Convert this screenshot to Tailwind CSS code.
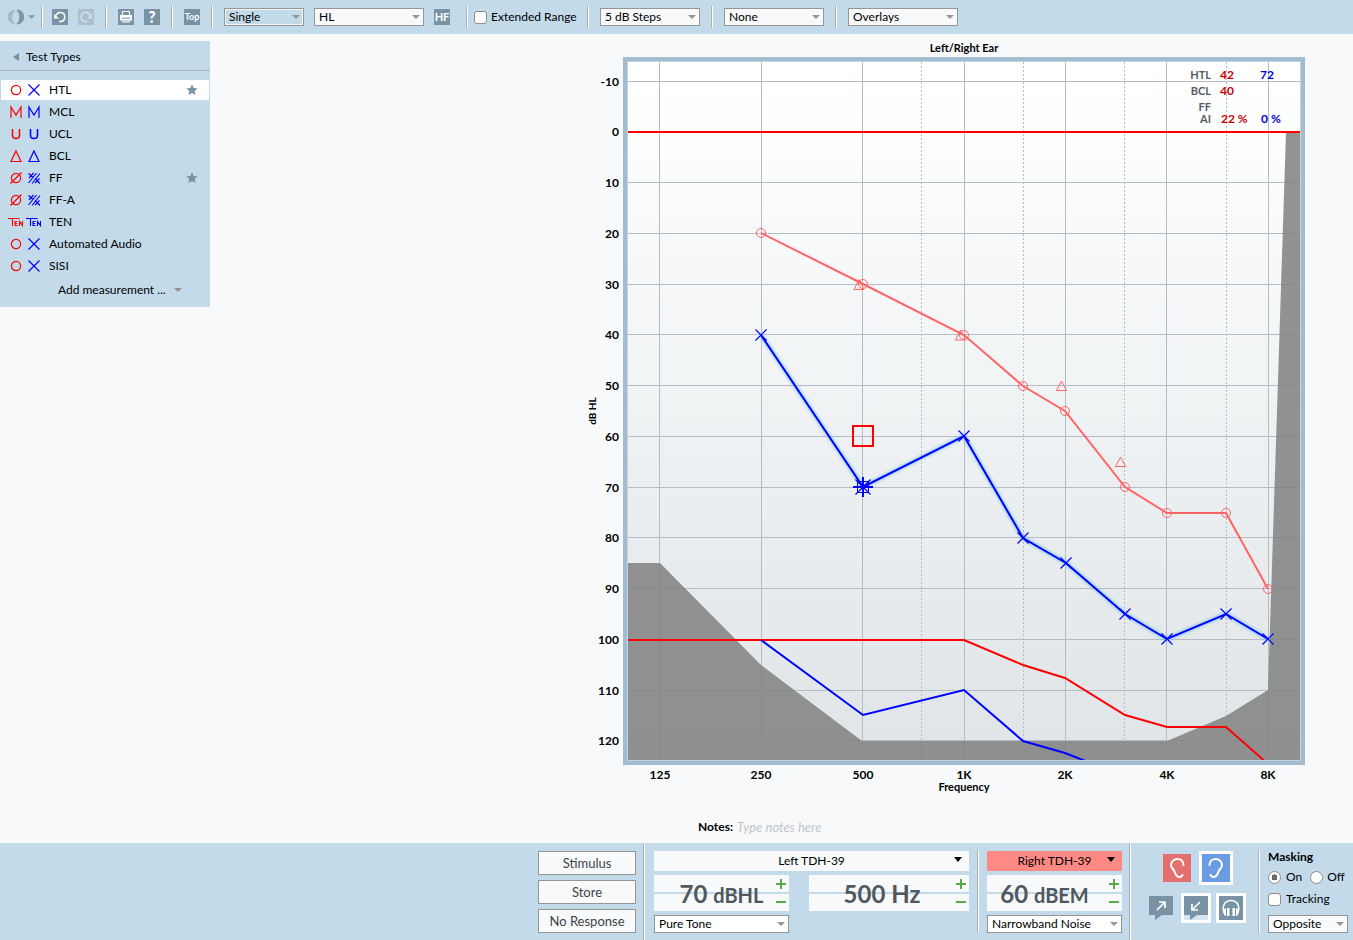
<!DOCTYPE html>
<html lang="en">
<head>
<meta charset="utf-8">
<title>Audiometry</title>
<meta name="viewport" content="width=device-width, initial-scale=1">
<script src="https://cdn.jsdelivr.net/npm/@tailwindcss/browser@4"></script>
</head>
<body class="flex min-h-screen flex-col bg-[#f7f9fb] font-['Lato','Open_Sans',sans-serif] text-[12px] leading-4 text-black">

<svg class="hidden" aria-hidden="true">
  <defs>
    <symbol id="o" viewBox="0 0 16 16"><circle cx="8" cy="8" r="4.6" fill="none" stroke="currentColor" stroke-width="1.2"/></symbol>
    <symbol id="x" viewBox="0 0 16 16"><path d="M2.500 2.500l11 11M13.500 2.500l-11 11" fill="none" stroke="currentColor" stroke-width="1.2"/></symbol>
    <symbol id="m" viewBox="0 0 16 16"><path d="M3 14V3l5 8 5-8v11" fill="none" stroke="currentColor" stroke-width="1.2"/></symbol>
    <symbol id="u" viewBox="0 0 16 16"><path d="M4.500 3v6.500q0 3 3.500 3t3.500-3V3" fill="none" stroke="currentColor" stroke-width="1.500"/></symbol>
    <symbol id="t" viewBox="0 0 16 16"><path d="M8 3L13 13.500H3z" fill="none" stroke="currentColor" stroke-width="1.2"/></symbol>
    <symbol id="oo" viewBox="0 0 16 16"><circle cx="8" cy="8" r="4.6" fill="none" stroke="currentColor" stroke-width="1.2"/><path d="M2.500 13.500l11-11" stroke="currentColor" stroke-width="1.2"/></symbol>
    <symbol id="xx" viewBox="0 0 16 16"><path d="M2.500 13l8-10M6 13.500l8-10M2.500 3.500l4.500 4M3 8l4.500-5M9 8.500l5 5M9 13l4.500-4.500" stroke="currentColor" stroke-width="1.200" fill="none"/></symbol>
    <symbol id="ten" viewBox="0 0 16 16"><path d="M0 4.500h11.500M4.500 4.500V12M9.500 7.500H7v4h2.500M7 9.500h2M11.500 12V7.500l3 4V7" stroke="currentColor" stroke-width="1.100" fill="none"/></symbol>
    <symbol id="star" viewBox="0 0 12 12"><path d="M6 .3l1.700 3.700 4 .4-3 2.700.9 4L6 9.100 2.400 11.100l.9-4L.3 4.400l4-.4z" fill="#7693a7"/></symbol>
    <symbol id="down" viewBox="0 0 8 4"><path d="M0 0h8L4 4z" fill="currentColor"/></symbol>
    <symbol id="plus" viewBox="0 0 10 10"><path d="M5 0v10M0 5h10" stroke="#5aa84c" stroke-width="2"/></symbol>
    <symbol id="minus" viewBox="0 0 10 2"><path d="M0 1h10" stroke="#5aa84c" stroke-width="2"/></symbol>
  </defs>
</svg>

<header class="flex h-[34px] shrink-0 items-center bg-[#c2daea]">
  <button class="ml-2 flex items-center" aria-label="Menu">
    <svg class="h-4 w-4" viewBox="0 0 16 16"><path d="M6.500 1.500A6.500 6.500 0 0 0 6.500 14.500 9 9 0 0 1 6.500 1.500z" fill="#a3bac9" stroke="#a3bac9"/><path d="M9 1a7 7 0 0 1 0 14 10 10 0 0 0 0-14z" fill="#7d98aa" stroke="#7d98aa"/></svg>
    <svg class="ml-1 h-1 w-[7px] text-[#7f97a6]"><use href="#down"/></svg>
  </button>
  <i class="ml-[6px] mr-[9px] h-[22px] w-[2px] border-r border-white bg-[#a9b3ba]"></i>
  <button class="h-4 w-4 bg-[#7893a5]" aria-label="Undo"><svg viewBox="0 0 16 16"><path d="M4 6.500a4.500 4.500 0 1 1 4.500 6H7" fill="none" stroke="#fff" stroke-width="1.500"/><path d="M2 5v4.500h5z" fill="#fff"/></svg></button>
  <button class="ml-[10px] h-4 w-4 bg-[#a9c1d1]" aria-label="Redo"><svg viewBox="0 0 16 16"><path d="M12 6.500a4.500 4.500 0 1 0-4.500 6H9" fill="none" stroke="#d3e3ee" stroke-width="1.500"/><path d="M14 5v4.500H9z" fill="#d3e3ee"/></svg></button>
  <i class="mx-[11px] h-[22px] w-[2px] border-r border-white bg-[#a9b3ba]"></i>
  <button class="h-4 w-4 bg-[#7893a5]" aria-label="Print"><svg viewBox="0 0 16 16"><path d="M4.500 6V2.500h7V6" fill="none" stroke="#fff" stroke-width="1.200"/><path d="M2 6h12v5.500H2z" fill="#fff"/><path d="M3.500 9.200h9" stroke="#7893a5"/><path d="M4 11h8v2.500H4z" fill="#fff"/><path d="M4.500 12h7" stroke="#7893a5" stroke-width=".8"/></svg></button>
  <button class="ml-[10px] h-4 w-4 bg-[#7893a5] text-center text-[16px] font-black leading-4 text-white" aria-label="Help">?</button>
  <i class="mx-[11px] h-[22px] w-[2px] border-r border-white bg-[#a9b3ba]"></i>
  <button class="h-4 w-4 bg-[#7893a5] text-center text-[9px] font-bold leading-4 text-white">Top</button>
  <i class="mx-[11px] h-[22px] w-[2px] border-r border-white bg-[#a9b3ba]"></i>
  <div class="relative h-[18px] w-20"><select aria-label="Presentation" class="block h-full w-full appearance-none border border-[#969696] bg-[#c2daea] pl-1 leading-4 outline outline-1 -outline-offset-2 outline-[#f0f5f9]"><option>Single</option></select><svg class="pointer-events-none absolute right-1 top-[7px] h-1 w-2 text-[#969696]"><use href="#down"/></svg></div>
  <div class="relative ml-[10px] h-[18px] w-[110px]"><select aria-label="Level unit" class="block h-full w-full appearance-none border border-[#969696] bg-[#f7f9fb] pl-1 leading-4"><option>HL</option></select><svg class="pointer-events-none absolute right-1 top-[7px] h-1 w-2 text-[#969696]"><use href="#down"/></svg></div>
  <button class="ml-[10px] h-4 w-4 bg-[#7893a5] text-center text-[11px] font-bold leading-4 text-white">HF</button>
  <i class="ml-4 mr-[6px] h-[22px] w-[2px] border-r border-white bg-[#a9b3ba]"></i>
  <label class="flex w-[113px] items-center gap-1 whitespace-nowrap"><input type="checkbox" class="h-[13px] w-[13px] appearance-none rounded-[3px] border border-[#8c8c8c] bg-white">Extended Range</label>
  <i class="mr-[11px] h-[22px] w-[2px] border-r border-white bg-[#a9b3ba]"></i>
  <div class="relative h-[18px] w-[100px]"><select aria-label="Step size" class="block h-full w-full appearance-none border border-[#969696] bg-[#f7f9fb] pl-1 leading-4"><option>5 dB Steps</option></select><svg class="pointer-events-none absolute right-1 top-[7px] h-1 w-2 text-[#969696]"><use href="#down"/></svg></div>
  <i class="mx-[11px] h-[22px] w-[2px] border-r border-white bg-[#a9b3ba]"></i>
  <div class="relative h-[18px] w-[100px]"><select aria-label="Condition" class="block h-full w-full appearance-none border border-[#969696] bg-[#f7f9fb] pl-1 leading-4"><option>None</option></select><svg class="pointer-events-none absolute right-1 top-[7px] h-1 w-2 text-[#969696]"><use href="#down"/></svg></div>
  <i class="mx-[11px] h-[22px] w-[2px] border-r border-white bg-[#a9b3ba]"></i>
  <div class="relative h-[18px] w-[110px]"><select aria-label="Overlays" class="block h-full w-full appearance-none border border-[#969696] bg-[#f7f9fb] pl-1 leading-4"><option>Overlays</option></select><svg class="pointer-events-none absolute right-1 top-[7px] h-1 w-2 text-[#969696]"><use href="#down"/></svg></div>
</header>

<main class="flex flex-1 items-start">
  <aside class="mt-[7px] w-[210px] shrink-0 bg-[#c2daea] pb-[7px]">
    <button class="flex h-[30px] w-full items-center gap-[7px] border-b border-[#a9b3ba] pl-[13px] pt-[2px]"><svg class="h-2 w-[6px]" viewBox="0 0 6 8"><path d="M6 0v8L0 4z" fill="#7f8b92"/></svg>Test Types</button>
    <ul class="flex flex-col gap-[2px] px-px pt-[9px]">
      <li><button class="flex h-5 w-full items-center bg-white pl-[7px] pr-[11px]"><svg class="h-4 w-4 text-[#ff0000]"><use href="#o"/></svg><svg class="ml-[2px] h-4 w-4 text-[#0000ff]"><use href="#x"/></svg><span class="ml-[7px] flex-1 text-left">HTL</span><svg class="h-3 w-3"><use href="#star"/></svg></button></li>
      <li><button class="flex h-5 w-full items-center pl-[7px]"><svg class="h-4 w-4 text-[#ff0000]"><use href="#m"/></svg><svg class="ml-[2px] h-4 w-4 text-[#0000ff]"><use href="#m"/></svg><span class="ml-[7px]">MCL</span></button></li>
      <li><button class="flex h-5 w-full items-center pl-[7px]"><svg class="h-4 w-4 text-[#ff0000]"><use href="#u"/></svg><svg class="ml-[2px] h-4 w-4 text-[#0000ff]"><use href="#u"/></svg><span class="ml-[7px]">UCL</span></button></li>
      <li><button class="flex h-5 w-full items-center pl-[7px]"><svg class="h-4 w-4 text-[#ff0000]"><use href="#t"/></svg><svg class="ml-[2px] h-4 w-4 text-[#0000ff]"><use href="#t"/></svg><span class="ml-[7px]">BCL</span></button></li>
      <li><button class="flex h-5 w-full items-center pl-[7px] pr-[11px]"><svg class="h-4 w-4 text-[#ff0000]"><use href="#oo"/></svg><svg class="ml-[2px] h-4 w-4 text-[#0000ff]"><use href="#xx"/></svg><span class="ml-[7px] flex-1 text-left">FF</span><svg class="h-3 w-3"><use href="#star"/></svg></button></li>
      <li><button class="flex h-5 w-full items-center pl-[7px]"><svg class="h-4 w-4 text-[#ff0000]"><use href="#oo"/></svg><svg class="ml-[2px] h-4 w-4 text-[#0000ff]"><use href="#xx"/></svg><span class="ml-[7px]">FF-A</span></button></li>
      <li><button class="flex h-5 w-full items-center pl-[7px]"><svg class="h-4 w-4 text-[#ff0000]"><use href="#ten"/></svg><svg class="ml-[2px] h-4 w-4 text-[#0000ff]"><use href="#ten"/></svg><span class="ml-[7px]">TEN</span></button></li>
      <li><button class="flex h-5 w-full items-center pl-[7px]"><svg class="h-4 w-4 text-[#ff0000]"><use href="#o"/></svg><svg class="ml-[2px] h-4 w-4 text-[#0000ff]"><use href="#x"/></svg><span class="ml-[7px]">Automated Audio</span></button></li>
      <li><button class="flex h-5 w-full items-center pl-[7px]"><svg class="h-4 w-4 text-[#ff0000]"><use href="#o"/></svg><svg class="ml-[2px] h-4 w-4 text-[#0000ff]"><use href="#x"/></svg><span class="ml-[7px]">SISI</span></button></li>
    </ul>
    <button class="mt-1 flex h-5 w-full items-center gap-2 pl-[58px]">Add measurement ...<svg class="h-1 w-2 text-[#969696]"><use href="#down"/></svg></button>
  </aside>

  <section class="flex min-w-0 flex-1 flex-col items-end">
    <svg class="block h-auto w-full max-w-[773px] text-[11px] font-bold" viewBox="580 34 773 777" role="img" aria-label="Audiogram">
      <defs>
        <linearGradient id="bg" x1="0" y1="0" x2="0" y2="1"><stop offset="0" stop-color="#ffffff"/><stop offset=".1" stop-color="#fdfefe"/><stop offset="1" stop-color="#dfe4e7"/></linearGradient>
        <filter id="glow" x="-10%" y="-10%" width="120%" height="120%"><feGaussianBlur stdDeviation="1.8"/></filter>
        <clipPath id="plot"><rect x="628" y="62" width="672" height="698"/></clipPath>
      </defs>
      <text x="964" y="52" text-anchor="middle">Left/Right Ear</text>
      <rect x="623" y="57" width="682" height="708" fill="#a2bdd0"/>
      <rect x="627" y="61" width="674" height="700" fill="#c9d0dc"/>
      <rect x="628" y="62" width="672" height="698" fill="url(#bg)"/>
      <path stroke="#b5bcc6" d="M659.500 62v698M761.500 62v698M862.500 62v698M964.500 62v698M1065.500 62v698M1166.500 62v698M1268.500 62v698M628 81.500h672M628 182.500h672M628 233.500h672M628 284.500h672M628 334.500h672M628 385.500h672M628 436.500h672M628 487.500h672M628 537.500h672M628 588.500h672M628 639.500h672M628 690.500h672M628 740.500h672"/>
      <path stroke="#b5bcc6" stroke-dasharray="2 2" d="M921.500 62v698M1023.500 62v698M1124.500 62v698M1226.500 62v698"/>
      <path d="M628 563H660L761 665 862 741H1167L1226 716 1268 690 1286 132H1300V760H628z" fill="#808080" fill-opacity=".85"/>
      <g clip-path="url(#plot)" fill="none" stroke-width="2">
        <path stroke="#ff0000" d="M628 132h673M628 640H964L1023 665 1065 678 1125 715 1167 727H1226L1268 764"/>
        <path stroke="#0000ff" d="M761 640L863 715 964 690 1023 741 1065 753 1093 764"/>
        <path stroke="#ff6464" d="M761 233L863 284 964 335 1023 386 1065 411 1125 487 1167 513H1226L1268 589"/>
        <path stroke="#7cc4ee" stroke-width="4" stroke-opacity=".8" filter="url(#glow)" d="M761 335L863 487 964 436 1023 538 1066 563 1125 614 1167 639 1226 614 1268 639"/>
        <path stroke="#0000ff" d="M761 335L863 487 964 436 1023 538 1066 563 1125 614 1167 639 1226 614 1268 639"/>
      </g>
      <g fill="none" stroke="#ff6464">
        <circle cx="761" cy="233" r="4.500"/><circle cx="863" cy="284" r="4.500"/><circle cx="964" cy="335" r="4.500"/><circle cx="1023" cy="386" r="4.500"/><circle cx="1065" cy="411" r="4.500"/><circle cx="1125" cy="487" r="4.500"/><circle cx="1167" cy="513" r="4.500"/><circle cx="1226" cy="513" r="4.500"/><circle cx="1268" cy="589" r="4.500"/>
        <path d="M859 279.500l5 10h-10zM960.500 330l5 10h-10zM1061.500 381l5 9.500h-10zM1120.500 457l5 9.500h-10z"/>
      </g>
      <path stroke="#0000ff" stroke-width="1.200" d="M755.500 329.500l11 11m0-11l-11 11M958.500 430.500l11 11m0-11l-11 11M1017.500 532.500l11 11m0-11l-11 11M1060.500 557.500l11 11m0-11l-11 11M1119.500 608.500l11 11m0-11l-11 11M1161.500 633.500l11 11m0-11l-11 11M1220.500 608.500l11 11m0-11l-11 11M1262.500 633.500l11 11m0-11l-11 11M855.500 479.500l15 15m0-15l-15 15"/>
      <path stroke="#0000ff" stroke-width="2" d="M863 477v20M853 487h20"/>
      <rect x="857.500" y="481.500" width="11" height="11" fill="none" stroke="#0000ff"/>
      <rect x="853" y="426" width="20" height="20" fill="none" stroke="#ff0000" stroke-width="2"/>
      <g class="text-[12px]" text-anchor="end">
        <text x="619" y="86">-10</text><text x="619" y="136">0</text><text x="619" y="187">10</text><text x="619" y="238">20</text><text x="619" y="289">30</text><text x="619" y="339">40</text><text x="619" y="390">50</text><text x="619" y="441">60</text><text x="619" y="492">70</text><text x="619" y="542">80</text><text x="619" y="593">90</text><text x="619" y="644">100</text><text x="619" y="695">110</text><text x="619" y="745">120</text>
      </g>
      <g class="text-[12px]" text-anchor="middle">
        <text x="660" y="779">125</text><text x="761" y="779">250</text><text x="863" y="779">500</text><text x="964" y="779">1K</text><text x="1065" y="779">2K</text><text x="1167" y="779">4K</text><text x="1268" y="779">8K</text>
      </g>
      <text x="964" y="791" text-anchor="middle">Frequency</text>
      <text transform="translate(596 411) rotate(-90)" text-anchor="middle" class="text-[10px]">dB HL</text>
      <g class="text-[11px]" fill="#555d63" text-anchor="end"><text x="1211" y="79">HTL</text><text x="1211" y="95">BCL</text><text x="1211" y="111">FF</text><text x="1211" y="123">AI</text></g>
      <g class="text-[12px]" fill="#c80000"><text x="1220" y="79">42</text><text x="1220" y="95">40</text><text x="1221" y="123">22 %</text></g>
      <g class="text-[12px]" fill="#0000dc"><text x="1260" y="79">72</text><text x="1261" y="123">0 %</text></g>
    </svg>
    <div class="flex h-8 w-full max-w-[773px] items-center gap-1 pl-[118px]">
      <label for="notes" class="font-bold">Notes:</label>
      <input id="notes" type="text" placeholder="Type notes here" class="min-w-0 flex-1 bg-transparent text-[13px] italic outline-none placeholder:text-[#c3c6c9]">
    </div>
  </section>
</main>

<footer class="flex h-[97px] shrink-0 justify-end bg-[#c2daea]">
  <div class="flex flex-col gap-[5px] pr-[7px] pt-2 text-[13px] text-[#3c4448]">
    <button class="h-6 w-[98px] border border-[#969696] bg-[#f7f9fb]">Stimulus</button>
    <button class="h-6 w-[98px] border border-[#969696] bg-[#f7f9fb]">Store</button>
    <button class="h-6 w-[98px] border border-[#969696] bg-[#f7f9fb]">No Response</button>
  </div>
  <i class="w-[2px] border-r border-white bg-[#a9b3ba]"></i>

  <section class="flex w-[332px] flex-col gap-1 px-[9px] pt-2" aria-label="Left channel">
    <button class="relative h-5 w-[315px] bg-[#f7f9fb]">Left TDH-39<svg class="absolute right-[7px] top-[6px] h-[5px] w-2 text-black" viewBox="0 0 8 5"><path d="M0 0h8L4 5z"/></svg></button>
    <div class="flex w-[315px] justify-between">
      <div class="relative flex h-9 w-[135px] items-center justify-center bg-[#f7f9fb] text-[#50585d]">
        <i class="absolute inset-x-0 top-[17px] h-[2px] bg-[#c2daea]"></i>
        <span class="relative pt-[2px] text-2xl font-bold">70 <span class="text-[20px]">dBHL</span></span>
        <button class="absolute right-[3px] top-1" aria-label="Raise left level"><svg class="block h-[10px] w-[10px]"><use href="#plus"/></svg></button>
        <button class="absolute bottom-2 right-[3px]" aria-label="Lower left level"><svg class="block h-[2px] w-[10px]"><use href="#minus"/></svg></button>
      </div>
      <div class="relative flex h-9 w-40 items-center bg-[#f7f9fb] text-[#50585d]">
        <i class="absolute inset-x-0 top-[17px] h-[2px] bg-[#c2daea]"></i>
        <span class="relative w-[146px] pt-[2px] text-center text-2xl font-bold">500 Hz</span>
        <button class="absolute right-[3px] top-1" aria-label="Raise frequency"><svg class="block h-[10px] w-[10px]"><use href="#plus"/></svg></button>
        <button class="absolute bottom-2 right-[3px]" aria-label="Lower frequency"><svg class="block h-[2px] w-[10px]"><use href="#minus"/></svg></button>
      </div>
    </div>
    <div class="relative h-[18px] w-[135px]"><select aria-label="Left signal" class="block h-full w-full appearance-none border border-[#969696] bg-white pl-1 leading-4"><option>Pure Tone</option></select><svg class="pointer-events-none absolute right-1 top-[7px] h-1 w-2 text-[#969696]"><use href="#down"/></svg></div>
  </section>
  <i class="my-[7px] w-[2px] border-r border-white bg-[#a9b3ba]"></i>

  <section class="flex flex-col gap-1 pl-2 pr-[7px] pt-2" aria-label="Right channel">
    <button class="relative h-5 w-[135px] bg-[#ff8a85]">Right TDH-39<svg class="absolute right-[7px] top-[6px] h-[5px] w-2 text-black" viewBox="0 0 8 5"><path d="M0 0h8L4 5z"/></svg></button>
    <div class="relative flex h-9 w-[135px] items-center bg-[#f7f9fb] text-[#50585d]">
      <i class="absolute inset-x-0 top-[17px] h-[2px] bg-[#c2daea]"></i>
      <span class="relative w-[115px] pt-[2px] text-center text-2xl font-bold">60 <span class="text-[20px]">dBEM</span></span>
      <button class="absolute right-[3px] top-1" aria-label="Raise right level"><svg class="block h-[10px] w-[10px]"><use href="#plus"/></svg></button>
      <button class="absolute bottom-2 right-[3px]" aria-label="Lower right level"><svg class="block h-[2px] w-[10px]"><use href="#minus"/></svg></button>
    </div>
    <div class="relative h-[18px] w-[135px]"><select aria-label="Right signal" class="block h-full w-full appearance-none border border-[#969696] bg-white pl-1 leading-4"><option>Narrowband Noise</option></select><svg class="pointer-events-none absolute right-1 top-[7px] h-1 w-2 text-[#969696]"><use href="#down"/></svg></div>
  </section>
  <i class="w-[2px] border-r border-white bg-[#a9b3ba]"></i>

  <section class="flex w-[127px] flex-col items-center gap-2 pl-[3px] pt-2" aria-label="Routing">
    <div class="flex gap-[5px]">
      <button class="h-[34px] w-[34px] p-[3px]" aria-label="Right ear"><svg class="block bg-[#e56f6f]" viewBox="0 0 28 28"><path d="M20.500 11C20.500 7.500 18 5 14.500 5S8 7.500 8 11C8 14 10.500 15 11.500 17.500 12.500 20 13 23 16.500 23 18 23 19 22 19.500 21" fill="none" stroke="#fff" stroke-width="2" stroke-linecap="round"/></svg></button>
      <button class="h-[34px] w-[34px] bg-white p-[3px]" aria-label="Left ear"><svg class="block bg-[#6b9be3]" viewBox="0 0 28 28"><path d="M7.500 11C7.500 7.500 10 5 13.500 5S20 7.500 20 11C20 14 17.500 15 16.500 17.500 15.500 20 15 23 11.500 23 10 23 9 22 8.500 21" fill="none" stroke="#fff" stroke-width="2" stroke-linecap="round"/></svg></button>
    </div>
    <div class="flex gap-[5px]">
      <button class="h-[30px] w-[30px] p-[3px]" aria-label="Talk forward"><svg class="block" viewBox="0 0 24 24"><path d="M0 0h24v19H13l-7 5v-5H0z" fill="#7893a5"/><path d="M8 14l7-7M10 6h6v6" fill="none" stroke="#fff" stroke-width="1.700"/></svg></button>
      <button class="h-[30px] w-[30px] bg-white p-[3px]" aria-label="Talk back"><svg class="block bg-[#d4e5f0]" viewBox="0 0 24 24"><path d="M0 0h24v19H13l-7 5v-5H0z" fill="#7893a5"/><path d="M16 6l-7 7M8 8v6h6" fill="none" stroke="#fff" stroke-width="1.700"/></svg></button>
      <button class="h-[30px] w-[30px] bg-white p-[3px]" aria-label="Monitor"><svg class="block bg-[#7893a5]" viewBox="0 0 24 24"><path d="M5 17C2.500 9 6.500 4.500 12 4.500S21.500 9 19 17" fill="none" stroke="#fff" stroke-width="1.500"/><path d="M5 13l2-1v8l-2-1q-1-3 0-6zM8 12h2.500v8H8zM13.500 12H16v8h-2.500zM17 12l2 1q1 3 0 6l-2 1z" fill="#fff"/></svg></button>
    </div>
  </section>
  <i class="my-[7px] w-[2px] border-r border-white bg-[#a9b3ba]"></i>

  <section class="flex w-[93px] flex-col pl-2 pt-[6px]" aria-labelledby="masking">
    <h2 id="masking" class="font-bold">Masking</h2>
    <div class="mt-1 flex gap-2">
      <label class="flex items-center gap-[5px]"><input type="radio" name="masking" checked class="h-[13px] w-[13px] appearance-none rounded-full border border-[#8c8c8c] bg-white bg-[radial-gradient(circle,#666_3px,transparent_3px)]">On</label>
      <label class="flex items-center gap-1"><input type="radio" name="masking" class="h-[13px] w-[13px] appearance-none rounded-full border border-[#8c8c8c] bg-white">Off</label>
    </div>
    <label class="mt-[6px] flex items-center gap-[5px]"><input type="checkbox" class="h-[13px] w-[13px] appearance-none rounded-[3px] border border-[#8c8c8c] bg-white">Tracking</label>
    <div class="relative mt-2 h-[18px] w-20"><select aria-label="Masking side" class="block h-full w-full appearance-none border border-[#969696] bg-[#f7f9fb] pl-1 leading-4"><option>Opposite</option></select><svg class="pointer-events-none absolute right-1 top-[7px] h-1 w-2 text-[#969696]"><use href="#down"/></svg></div>
  </section>
</footer>
</body>
</html>
